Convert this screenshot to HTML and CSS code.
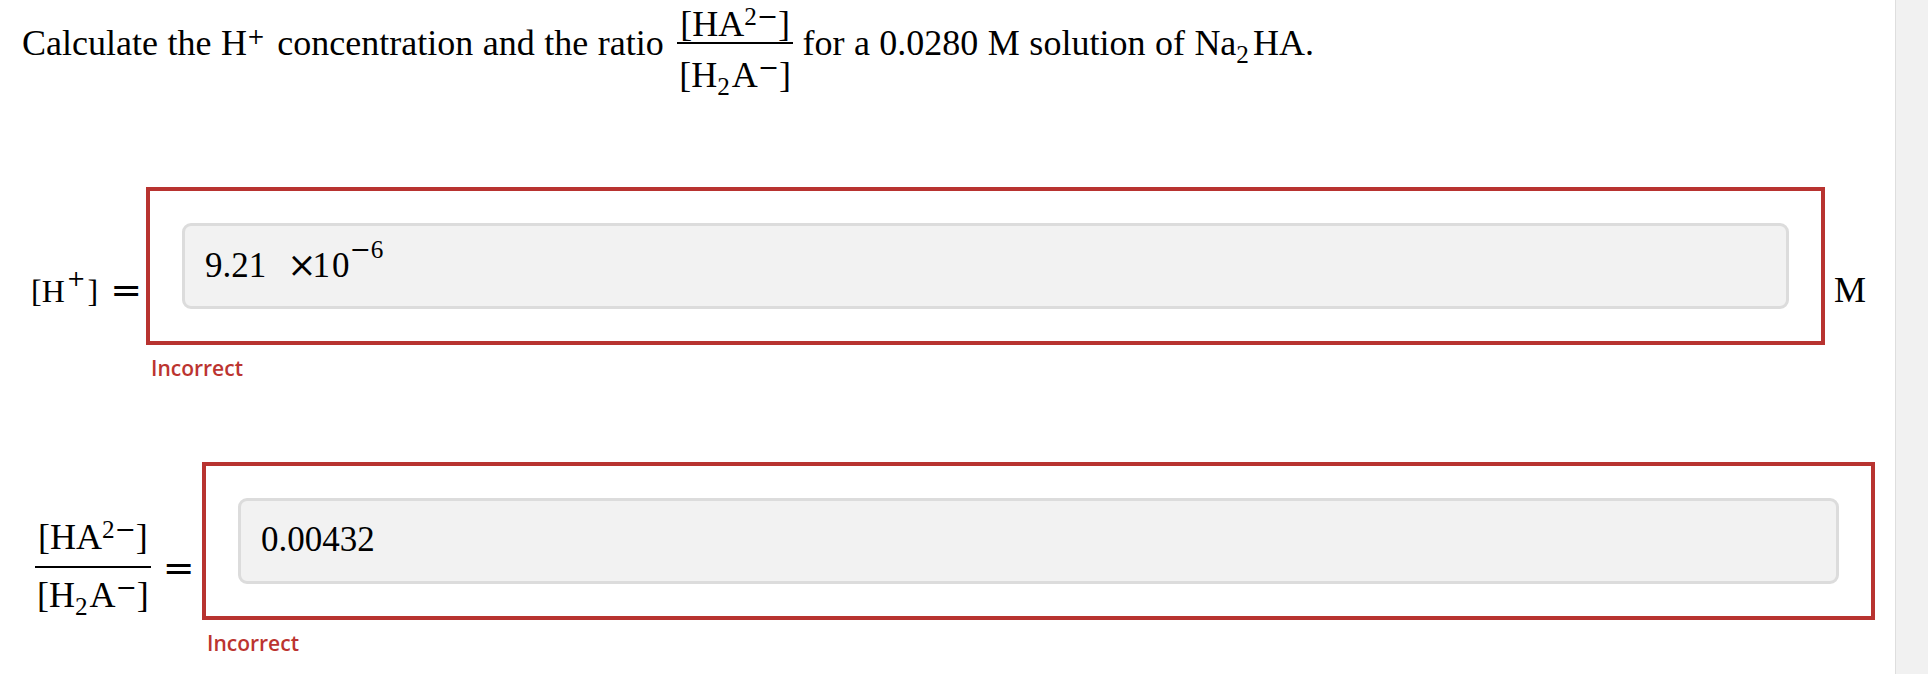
FILE: index.html
```html
<!DOCTYPE html>
<html lang="en">
<head>
<meta charset="utf-8">
<title>Na2HA solution</title>
<link rel="stylesheet" href="styles.css">
</head>
<body>
<div class="viewport">
  <main class="page">
    <p class="question">Calculate the H<sup class="sup sup-q"><span class="op plus">+</span></sup> concentration and the ratio <span class="frac frac-q"><span class="num">[HA<sup class="sup">2<span class="op minus">−</span></sup>]</span><span class="den">[H<sub class="sub">2</sub>A<sup class="sup"><span class="op minus">−</span></sup>]</span></span> for a 0.0280 M solution of Na<sub class="sub sub-wide">2</sub>HA.</p>

    <div class="answer-row row-h">
      <div class="label label-h">[H<sup class="sup sup-hi"><span class="op plus">+</span></sup>]<span class="op eq">=</span></div>
      <div class="answer">
        <div class="box">
          <div class="input">9.21<span class="op times">×</span><span class="base">1</span>0<sup class="sup sup-exp"><span class="op minus">−</span>6</sup></div>
        </div>
        <div class="feedback">Incorrect</div>
      </div>
      <div class="unit">M</div>
    </div>

    <div class="answer-row row-ratio">
      <div class="label label-ratio">
        <span class="frac frac-a"><span class="num">[HA<sup class="sup">2<span class="op minus">−</span></sup>]</span><span class="den">[H<sub class="sub">2</sub>A<sup class="sup"><span class="op minus">−</span></sup>]</span></span>
        <span class="op eq">=</span>
      </div>
      <div class="answer">
        <div class="box">
          <div class="input">0.00432</div>
        </div>
        <div class="feedback">Incorrect</div>
      </div>
    </div>
  </main>
  <div class="scrollbar"></div>
</div>
</body>
</html>
```

FILE: styles.css
```css
* { box-sizing: border-box; }
html, body { margin: 0; padding: 0; background: #fff; }
body {
  font-family: "Liberation Serif", "Times New Roman", serif;
  color: #000;
}
.viewport {
  display: flex;
  height: 674px;
  overflow: hidden;
}
.page {
  flex: 1;
  min-width: 0;
  padding: 7px 20px 0 22px;
}
.scrollbar {
  flex: none;
  width: 33px;
  background: #f1f1f1;
  border-left: 1px solid #dedede;
}

/* math bits */
.sup { font-size: 0.7em; line-height: 0; vertical-align: 0.42em; }
.sub { font-size: 0.7em; line-height: 0; vertical-align: -0.33em; margin-right: 2px; }
.sub-wide { margin-right: 4px; }
.sup-q { margin-right: 3px; }
.sup-hi { vertical-align: 0.72em; margin: 0 2px 0 2px; }
.sup-hi .plus { font-size: 1em; }
.sup-exp { font-size: 0.72em; vertical-align: 0.75em; }
.op { font-family: "DejaVu Serif", serif; }
.plus { font-size: 0.85em; }
.frac {
  display: inline-flex;
  flex-direction: column;
  text-align: center;
}

/* question */
.question {
  margin: 0;
  font-size: 36px;
  line-height: 40px;
  word-spacing: 0.5px;
  white-space: nowrap;
}
.frac-q { vertical-align: 19px; margin-left: 4px; }
.frac-q .num { line-height: 34px; padding: 0 2px 1px; }
.frac-q .den { line-height: 40px; padding: 11px 2px 0; border-top: 2px solid #000; }

/* answer rows */
.answer-row {
  display: flex;
  align-items: flex-start;
}
.row-h { margin-top: 92px; }
.row-ratio { margin-top: 80px; }
.label { flex: none; white-space: nowrap; }
.label-h {
  width: 124px;
  padding: 83px 0 0 9px;
  font-size: 32px;
  line-height: 40px;
}
.eq { font-size: 38px; }
.label-h .eq { margin-left: 12px; vertical-align: -1px; }

.label-ratio {
  width: 180px;
  display: flex;
  align-items: flex-start;
  padding: 55px 0 0 13px;
}
.frac-a { font-size: 36px; }
.frac-a .num { line-height: 40px; padding: 0 2px 9px; }
.frac-a .den { line-height: 40px; padding: 7px 2px 0; border-top: 2px solid #000; }
.label-ratio .eq {
  line-height: 40px;
  margin: 31px 0 0 12px;
}

.answer { flex: 1; min-width: 0; }
.box {
  border: 4px solid #b83330;
  padding: 32px;
}
.input {
  height: 86px;
  border: 3px solid #dcdcdc;
  border-radius: 9px;
  background: #f2f2f2;
  padding: 19px 0 0 20px;
  font-size: 35px;
  line-height: 40px;
  white-space: nowrap;
}
.times { margin-left: 21px; letter-spacing: -4px; }
.base { letter-spacing: 2px; }
.feedback {
  margin-top: 9px;
  padding-left: 5px;
  font-family: "Open Sans", sans-serif;
  font-size: 21px;
  font-weight: 600;
  line-height: 28px;
  color: #bc3430;
}
.unit {
  flex: none;
  width: 50px;
  padding: 83px 0 0 9px;
  font-size: 36px;
  line-height: 40px;
}
```
